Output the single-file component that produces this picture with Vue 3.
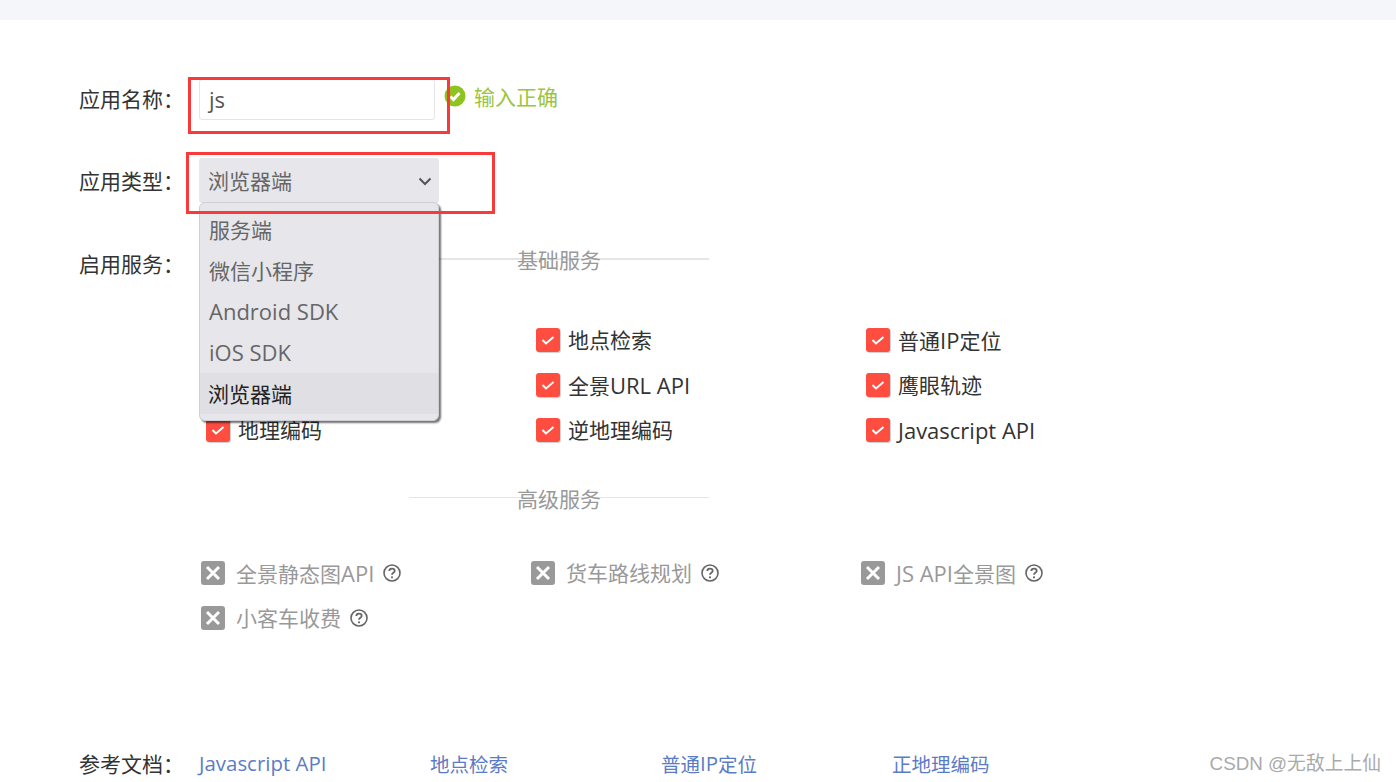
<script setup>
const dropdown = ['服务端', '微信小程序', 'Android SDK', 'iOS SDK', '浏览器端']
const basic = ['', '地点检索', '普通IP定位', '', '全景URL API', '鹰眼轨迹', '地理编码', '逆地理编码', 'Javascript API']
const advanced = ['全景静态图API', '货车路线规划', 'JS API全景图', '小客车收费']
const docs = ['Javascript API', '地点检索', '普通IP定位', '正地理编码']

// Latin runs are set slightly larger than the CJK around them
const parts = (text) =>
  text
    .split(/([A-Za-z][A-Za-z ]*)/)
    .filter(Boolean)
    .map((t) => ({ t, lat: /^[A-Za-z]/.test(t) }))
</script>

<template>
  <div class="page">
    <div class="topbar"></div>
    <div class="form">
      <div class="row name-row">
        <label class="label">应用名称：</label>
        <div class="input"><span class="lat">js</span></div>
        <div class="valid">
          <svg width="22" height="22" viewBox="0 0 22 22">
            <circle cx="11" cy="11" r="10.5" fill="#8fc31f" />
            <path d="M6.5 11.5l3 3 6-6.5" fill="none" stroke="#fff" stroke-width="3" />
          </svg>
          <span>输入正确</span>
        </div>
      </div>

      <div class="row type-row">
        <label class="label">应用类型：</label>
        <div class="select">
          <span class="select-text">浏览器端</span>
          <svg class="chevron" width="14" height="9" viewBox="0 0 14 9">
            <path d="M1.5 1.5L7 7l5.500-5.500" fill="none" stroke="#555" stroke-width="2" />
          </svg>
          <ul class="menu">
            <li v-for="(o, i) in dropdown" :key="o" :class="{ active: i === 4 }">
              <span v-for="p in parts(o)" :key="p.t" :class="{ lat: p.lat }">{{ p.t }}</span>
            </li>
          </ul>
        </div>
      </div>

      <div class="row service-row">
        <label class="label">启用服务：</label>
        <div class="services">
          <div class="divider basic-title"><span>基础服务</span></div>
          <div class="grid basic-grid">
            <div v-for="(b, i) in basic" :key="i" class="check">
              <template v-if="b">
                <span class="box">
                  <svg width="14" height="12" viewBox="0 0 14 12">
                    <path d="M1.500 6l3.500 3.500L12.500 3" fill="none" stroke="#fff" stroke-width="2" />
                  </svg>
                </span>
                <span class="txt"><span v-for="p in parts(b)" :key="p.t" :class="{ lat: p.lat }">{{ p.t }}</span></span>
              </template>
            </div>
          </div>
          <div class="divider adv-title"><span>高级服务</span></div>
          <div class="grid adv-grid">
            <div v-for="a in advanced" :key="a" class="check disabled">
              <span class="box off">
                <svg width="16" height="16" viewBox="0 0 16 16">
                  <path d="M2 2l12 12M14 2L2 14" fill="none" stroke="#fff" stroke-width="3" />
                </svg>
              </span>
              <span class="txt"><span v-for="p in parts(a)" :key="p.t" :class="{ lat: p.lat }">{{ p.t }}</span></span>
              <svg class="help" width="18" height="18" viewBox="0 0 18 18">
                <circle cx="9" cy="9" r="8" fill="none" stroke="#666" stroke-width="1.600" />
                <path d="M6.300 7.100c0-1.700 1.200-2.500 2.700-2.500s2.700.9 2.700 2.300c0 1.900-2.700 1.900-2.700 3.800" fill="none" stroke="#666" stroke-width="1.800" />
                <circle cx="9" cy="13.300" r="1.100" fill="#666" />
              </svg>
            </div>
          </div>
        </div>
      </div>

      <div class="row doc-row">
        <label class="label">参考文档：</label>
        <a v-for="d in docs" :key="d" class="doc"><span v-for="p in parts(d)" :key="p.t" :class="{ lat: p.lat }">{{ p.t }}</span></a>
      </div>
    </div>

    <div class="redbox redbox-a"></div>
    <div class="redbox redbox-b"></div>
    <div class="watermark">CSDN @无敌上上仙</div>
  </div>
</template>

<style>
html, body { margin: 0; background: #fff; }
</style>

<style scoped>
.page {
  position: relative;
  width: 1396px;
  height: 782px;
  overflow: hidden;
  background: #fff;
  color: #333;
  font-family: "Open Sans", "Noto Sans CJK SC", sans-serif;
  font-size: 21px;
}
.lat { font-size: 1.048em; }
.topbar { height: 20px; background: #f5f6fa; }
.form { padding: 59px 0 0 79px; }
.row { display: flex; align-items: center; }
.label { width: 120px; flex: none; color: #333; line-height: 41px; }
.input {
  box-sizing: border-box;
  width: 236px;
  height: 41px;
  padding-left: 9px;
  border: 1px solid #e3e5ea;
  border-radius: 3px;
  line-height: 39px;
  color: #555;
}
.valid {
  display: flex;
  align-items: center;
  gap: 8px;
  margin: -8px 0 0 9px;
  color: #9bc53d;
}
.type-row { margin-top: 38px; height: 45px; }
.type-row .label { padding-top: 2px; }
.select {
  position: relative;
  box-sizing: border-box;
  display: flex;
  align-items: center;
  justify-content: space-between;
  width: 240px;
  height: 45px;
  padding: 0 7px 0 9px;
  background: #e6e6eb;
  border-radius: 3px;
  color: #666;
}
.select-text { margin-top: -1px; }
.chevron { margin-top: 1px; }
.menu {
  position: absolute;
  z-index: 5;
  top: 44px;
  left: 0;
  box-sizing: border-box;
  width: 240px;
  height: 219px;
  margin: 0;
  padding: 6px 0;
  list-style: none;
  background: #e6e6eb;
  border: 1px solid #cfcfd6;
  border-radius: 6px;
  box-shadow: 2px 2px 2px rgba(0, 0, 0, 0.55);
}
.menu li { height: 41px; padding-left: 9px; line-height: 43px; color: #666; }
.menu li.active { background: #dfdfe4; color: #222; padding-left: 8px; }
.menu .lat, .doc .lat { display: inline-block; transform: translateY(-1px); }
.service-row { align-items: flex-start; margin-top: 41px; }
.service-row .label { line-height: 41px; }
.services { width: 1000px; }
.divider {
  position: relative;
  width: 300px;
  margin-left: 210px;
  height: 1px;
  background: #e5e5e5;
  color: #999;
}
.divider span {
  position: absolute;
  left: 50%;
  top: 2px;
  transform: translate(-50%, -50%);
  white-space: nowrap;
  line-height: 28px;
}
.basic-title { margin-top: 14px; height: 2px; }
.grid { display: grid; grid-template-columns: repeat(3, 330px); }
.basic-grid { margin: 57px 0 0 7px; grid-auto-rows: 45px; }
.adv-title { margin-top: 45px; }
.adv-grid { margin: 52px 0 0 2px; grid-auto-rows: 45px; }
.check { display: flex; align-items: center; height: 45px; color: #333; }
.txt { padding-top: 2px; line-height: 45px; white-space: nowrap; }
.box {
  display: flex;
  align-items: center;
  justify-content: center;
  flex: none;
  width: 24px;
  height: 24px;
  margin-right: 8px;
  border-radius: 3px;
  background: #ff4d40;
  box-shadow: 1px 1px 1px #ccc;
}
.box.off { background: #999; box-shadow: none; margin-right: 11px; }
.disabled { color: #999; }
.help { margin-left: 9px; }
.doc-row { position: absolute; top: 744px; left: 79px; }
.doc { width: 231px; color: #5b7cc4; font-size: 19.5px; line-height: 41px; flex: none; }
.redbox { position: absolute; box-sizing: border-box; border: 3px solid #f93a3a; z-index: 6; }
.redbox-a { left: 188px; top: 77px; width: 262px; height: 57px; }
.redbox-b { left: 186px; top: 152px; width: 309px; height: 62px; }
.watermark {
  position: absolute;
  right: 15px;
  top: 751px;
  font-family: "Liberation Sans", "Noto Sans CJK SC", sans-serif;
  font-size: 18.8px;
  line-height: 26px;
  color: #aaa;
  white-space: nowrap;
}
</style>
